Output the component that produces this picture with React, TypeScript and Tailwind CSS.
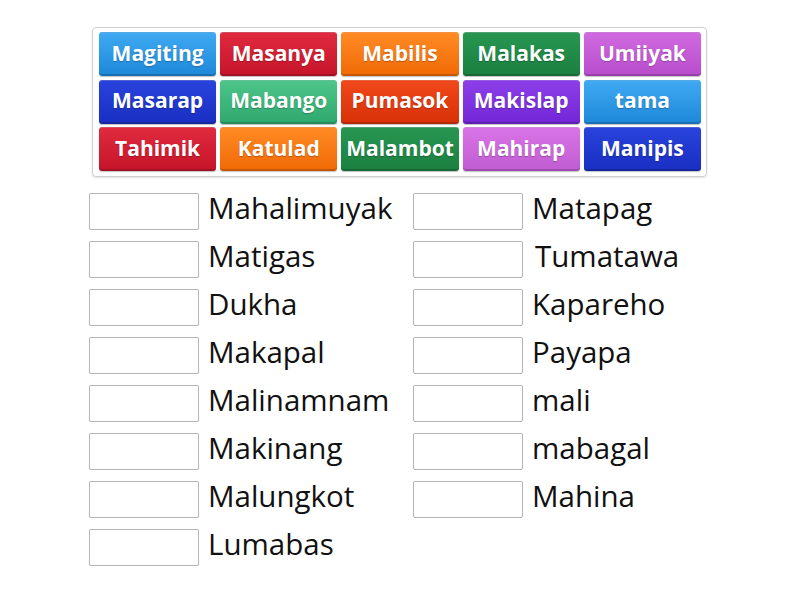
import React from "react";

type Tile = { label: string; from: string; to: string };

const tiles: Tile[] = [
  { label: "Magiting", from: "#3fa9f2", to: "#1d88d8" },
  { label: "Masanya", from: "#e02a3e", to: "#c5142a" },
  { label: "Mabilis", from: "#ff8a25", to: "#f06a05" },
  { label: "Malakas", from: "#279651", to: "#1b7f40" },
  { label: "Umiiyak", from: "#d06ae0", to: "#b84ccc" },
  { label: "Masarap", from: "#2843dc", to: "#1a2ec2" },
  { label: "Mabango", from: "#4cc48a", to: "#2fa86e" },
  { label: "Pumasok", from: "#f0481a", to: "#d83008" },
  { label: "Makislap", from: "#8c3ee8", to: "#7226d6" },
  { label: "tama", from: "#3fa9f2", to: "#1d88d8" },
  { label: "Tahimik", from: "#e02a3e", to: "#c5142a" },
  { label: "Katulad", from: "#ff8a25", to: "#f06a05" },
  { label: "Malambot", from: "#279651", to: "#1b7f40" },
  { label: "Mahirap", from: "#d874e6", to: "#c05cd2" },
  { label: "Manipis", from: "#2843dc", to: "#1a2ec2" },
];

const left = [
  "Mahalimuyak",
  "Matigas",
  "Dukha",
  "Makapal",
  "Malinamnam",
  "Makinang",
  "Malungkot",
  "Lumabas",
];
const right = [
  "Matapag",
  "Tumatawa",
  "Kapareho",
  "Payapa",
  "mali",
  "mabagal",
  "Mahina",
];

function Row({ text }: { text: string }) {
  return (
    <div className="flex items-center h-[36px]">
      <div className="w-[110px] h-[37px] border border-[#b5b5b5] rounded-[2px] bg-white shrink-0" />
      <div
        className={
          "text-[29.5px] leading-none text-[#111] -mt-[6px] " +
          (text === "Tumatawa" ? "ml-[12px]" : "ml-[9px]")
        }
      >
        {text}
      </div>
    </div>
  );
}

export default function App() {
  return (
    <div
      className="w-[800px] h-[600px] bg-white overflow-hidden"
      style={{ fontFamily: '"Open Sans", "Noto Sans", sans-serif' }}
    >
      <div className="pl-[92px] pt-[27px]">
        <div className="w-[615px] h-[150px] border border-[#cfcfcf] rounded-[4px] pl-[6px] pr-[5px] pt-[4px] shadow-[0_1px_2px_rgba(0,0,0,0.12)]">
          <div className="grid grid-cols-5 gap-x-[4px] gap-y-[3.5px]">
            {tiles.map((t) => (
              <div
                key={t.label}
                className="h-[44px] rounded-[3px] flex items-center justify-center text-white font-bold text-[21px] leading-none pb-[3px] border-t border-white/25 shadow-[inset_0_-2px_0_rgba(0,0,0,0.18),0_1px_1px_rgba(0,0,0,0.25)] [text-shadow:0_1px_1px_rgba(0,0,0,0.25)]"
                style={{ background: `linear-gradient(${t.from}, ${t.to})` }}
              >
                {t.label}
              </div>
            ))}
          </div>
        </div>
        <div className="flex mt-[16px] -ml-[3px]">
          <div className="w-[324px] flex flex-col gap-[12px]">
            {left.map((w) => (
              <Row key={w} text={w} />
            ))}
          </div>
          <div className="w-[324px] flex flex-col gap-[12px]">
            {right.map((w) => (
              <Row key={w} text={w} />
            ))}
          </div>
        </div>
      </div>
    </div>
  );
}
